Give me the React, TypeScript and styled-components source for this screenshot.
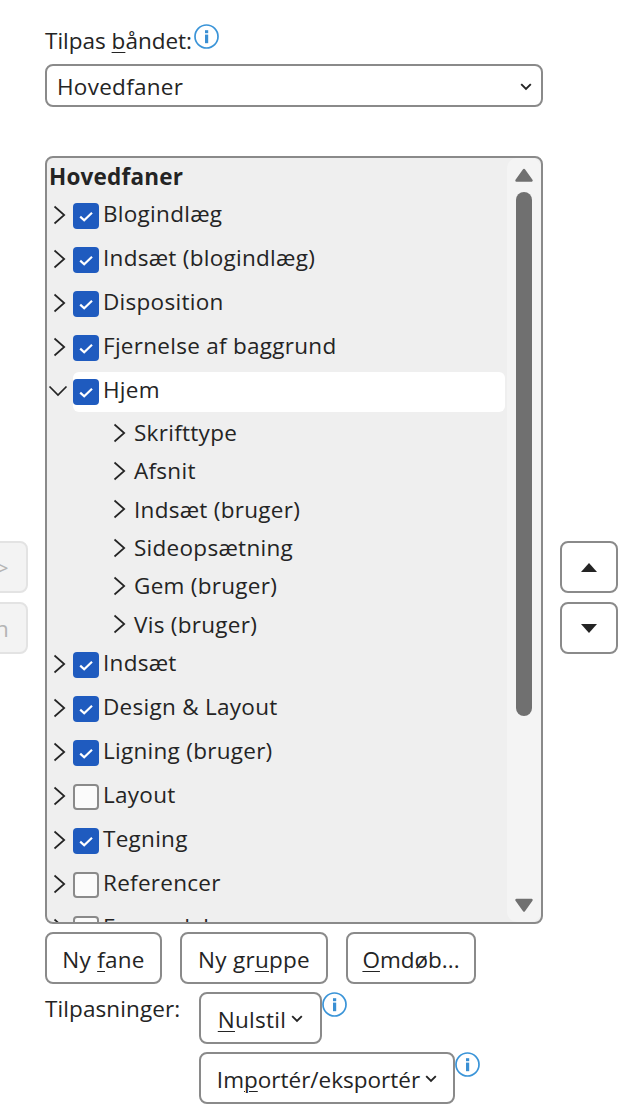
import styled, { createGlobalStyle } from "styled-components";

const GlobalStyle = createGlobalStyle`
  html, body {
    margin: 0;
    padding: 0;
    background: #fff;
    overflow: hidden;
  }
  body {
    font-family: "Open Sans", "Noto Sans", sans-serif;
    color: #242424;
  }
`;

const Page = styled.div`
  width: 630px;
  height: 1118px;
  overflow: hidden;
  display: grid;
  grid-template-columns: 28px 498px 1fr;
  column-gap: 17px;
  font-size: 22.5px;
  letter-spacing: 0.28px;
`;

const LeftColumn = styled.div`
  display: flex;
  flex-direction: column;
  align-items: flex-end;
  gap: 9px;
  padding-top: 541px;
`;

const MainColumn = styled.div`
  display: flex;
  flex-direction: column;
`;

const RightColumn = styled.div`
  display: flex;
  flex-direction: column;
  gap: 9px;
  padding-top: 541px;
`;

const TitleRow = styled.div`
  display: flex;
  align-items: flex-start;
  height: 64px;
  padding-top: 24px;
  box-sizing: border-box;
`;

const TitleText = styled.span`
  line-height: 34px;
  letter-spacing: 0;
  margin-right: 2px;
`;

const Key = styled.span`
  text-decoration: underline;
  text-decoration-thickness: 1px;
  text-underline-offset: 3px;
`;

const InfoWrap = styled.span`
  display: inline-flex;
  flex: none;
`;

const SelectBox = styled.div`
  box-sizing: border-box;
  height: 43px;
  border: 2px solid #8a8a8a;
  border-radius: 8px;
  display: flex;
  align-items: center;
  justify-content: space-between;
  padding: 2px 9px 0 10px;
  margin-bottom: 49px;
`;

const Tree = styled.div`
  position: relative;
  box-sizing: border-box;
  height: 768px;
  border: 2px solid #8a8a8a;
  border-radius: 8px;
  background: #efefef;
  overflow: hidden;
  padding-top: 4px;
`;

const TreeHeader = styled.div`
  height: 31px;
  line-height: 30px;
  padding-left: 2px;
  font-weight: 700;
  letter-spacing: 0.2px;
`;

const Row = styled.div`
  height: 44px;
  display: flex;
  align-items: center;
  position: relative;
  width: 458px;
`;

const RowHighlight = styled.div`
  position: absolute;
  left: 26px;
  right: 0;
  top: 3px;
  bottom: 1px;
  background: #fff;
  border-radius: 6px;
`;

const ChevronSlot = styled.span`
  position: relative;
  width: 26px;
  height: 26px;
  flex: none;
  display: flex;
  align-items: center;
  justify-content: center;
  margin-left: -1px;
  margin-right: 1px;
`;

const Check = styled.span<{ $on: boolean }>`
  position: relative;
  box-sizing: border-box;
  flex: none;
  width: 26px;
  height: 26px;
  margin-top: 2px;
  border-radius: 4px;
  display: flex;
  align-items: center;
  justify-content: center;
  background: ${(p) => (p.$on ? "#1f5bbf" : "#fbfbfb")};
  border: ${(p) => (p.$on ? "none" : "2px solid #8a8a8a")};
`;

const RowLabel = styled.span`
  position: relative;
  margin-left: 4px;
  margin-top: -4px;
  white-space: nowrap;
`;

const SubList = styled.div`
  height: 229px;
  padding-top: 1px;
  box-sizing: border-box;
`;

const SubRow = styled.div`
  height: 38.3px;
  display: flex;
  align-items: center;
  padding-left: 66px;
`;

const SubLabel = styled.span`
  margin-left: 8px;
  margin-top: -1px;
  white-space: nowrap;
`;

const ScrollTrack = styled.div`
  position: absolute;
  top: 0;
  right: 0;
  bottom: 0;
  width: 34px;
  background: #f4f4f4;
  border-radius: 10px;
  display: flex;
  flex-direction: column;
  align-items: center;
`;

const ScrollThumb = styled.div`
  width: 16px;
  height: 524px;
  margin-top: 9px;
  background: #707070;
  border-radius: 8px;
`;

const ScrollArrow = styled.svg<{ $down?: boolean }>`
  width: 18px;
  height: 15px;
  flex: none;
  margin-top: ${(p) => (p.$down ? "182px" : "10px")};
`;

const ActionRow = styled.div`
  display: flex;
  gap: 18px;
  margin-top: 8px;
`;

const Button = styled.div<{ $width: number; $tight?: boolean }>`
  box-sizing: border-box;
  width: ${(p) => p.$width}px;
  height: 52px;
  padding-top: 2px;
  border: 2px solid #8a8a8a;
  border-radius: 8px;
  background: #fff;
  display: flex;
  align-items: center;
  justify-content: center;
  gap: 5px;
  white-space: nowrap;
  letter-spacing: ${(p) => (p.$tight ? "0" : "inherit")};
`;

const CustomRow = styled.div`
  display: grid;
  grid-template-columns: 154px auto;
  margin-top: 8px;
`;

const CustomLabel = styled.span`
  line-height: 34px;
  letter-spacing: 0.1px;
`;

const CustomButtons = styled.div`
  display: flex;
  flex-direction: column;
  gap: 8px;
`;

const ButtonLine = styled.div`
  display: flex;
  align-items: flex-start;
`;

const SideButton = styled.div<{ $disabled?: boolean }>`
  box-sizing: border-box;
  width: 58px;
  height: 52px;
  flex: none;
  border-radius: 8px;
  display: flex;
  align-items: center;
  justify-content: ${(p) => (p.$disabled ? "flex-end" : "center")};
  padding-right: ${(p) => (p.$disabled ? "17px" : "0")};
  color: #b5b5b5;
  background: ${(p) => (p.$disabled ? "#f3f3f3" : "#fff")};
  border: 2px solid ${(p) => (p.$disabled ? "#e3e3e3" : "#8a8a8a")};
`;

const InfoIcon = () => (
  <InfoWrap>
    <svg width="25" height="25" viewBox="0 0 25 25">
      <circle cx="12.5" cy="12.5" r="11.5" fill="#fff" stroke="#3a94d8" strokeWidth="1.7" />
      <rect x="11" y="6.2" width="3.2" height="3" fill="#3a8fd3" />
      <rect x="11" y="10.6" width="3.2" height="8.6" fill="#3a8fd3" />
    </svg>
  </InfoWrap>
);

const Chevron = ({ open }: { open?: boolean }) =>
  open ? (
    <svg width="20" height="12" viewBox="0 0 20 12" style={{ marginLeft: -3 }}>
      <path d="M1.5 1.5 L10 10 L18.5 1.5" fill="none" stroke="#242424" strokeWidth="1.7" />
    </svg>
  ) : (
    <svg width="13" height="20" viewBox="0 0 13 20" style={{ marginTop: -1 }}>
      <path d="M1.5 1.5 L11.2 10 L1.5 18.5" fill="none" stroke="#242424" strokeWidth="1.7" />
    </svg>
  );

const SmallChevron = () => (
  <svg width="12" height="8" viewBox="0 0 12 8">
    <path d="M1.2 1.2 L6 6 L10.8 1.2" fill="none" stroke="#242424" strokeWidth="1.9" />
  </svg>
);

const CheckMark = () => (
  <svg width="16" height="13" viewBox="0 0 16 13">
    <path d="M2.2 6.6 L6.2 10.2 L14 2.8" fill="none" stroke="#fff" strokeWidth="2.2" />
  </svg>
);

type TreeItem = { label: string; checked: boolean; open?: boolean };

const topItems: TreeItem[] = [
  { label: "Blogindlæg", checked: true },
  { label: "Indsæt (blogindlæg)", checked: true },
  { label: "Disposition", checked: true },
  { label: "Fjernelse af baggrund", checked: true },
  { label: "Hjem", checked: true, open: true },
];

const bottomItems: TreeItem[] = [
  { label: "Indsæt", checked: true },
  { label: "Design & Layout", checked: true },
  { label: "Ligning (bruger)", checked: true },
  { label: "Layout", checked: false },
  { label: "Tegning", checked: true },
  { label: "Referencer", checked: false },
  { label: "Forsendelser", checked: false },
];

const subItems = ["Skrifttype", "Afsnit", "Indsæt (bruger)", "Sideopsætning", "Gem (bruger)", "Vis (bruger)"];

const TreeRow = ({ item }: { item: TreeItem }) => (
  <Row>
    {item.open && <RowHighlight />}
    <ChevronSlot>
      <Chevron open={item.open} />
    </ChevronSlot>
    <Check $on={item.checked}>{item.checked && <CheckMark />}</Check>
    <RowLabel>{item.label}</RowLabel>
  </Row>
);

export default function App() {
  return (
    <Page>
      <GlobalStyle />
      <LeftColumn>
        <SideButton $disabled>&gt;</SideButton>
        <SideButton $disabled>n</SideButton>
      </LeftColumn>

      <MainColumn>
        <TitleRow>
          <TitleText>
            Tilpas <Key>b</Key>åndet:
          </TitleText>
          <InfoIcon />
        </TitleRow>
        <SelectBox>
          Hovedfaner
          <SmallChevron />
        </SelectBox>

        <Tree>
          <TreeHeader>Hovedfaner</TreeHeader>
          {topItems.map((item) => (
            <TreeRow key={item.label} item={item} />
          ))}
          <SubList>
            {subItems.map((label) => (
              <SubRow key={label}>
                <Chevron />
                <SubLabel>{label}</SubLabel>
              </SubRow>
            ))}
          </SubList>
          {bottomItems.map((item) => (
            <TreeRow key={item.label} item={item} />
          ))}
          <ScrollTrack>
            <ScrollArrow viewBox="0 0 18 15">
              <path d="M9 2 L16.5 12.5 L1.5 12.5 Z" fill="#707070" stroke="#707070" strokeWidth="2.4" strokeLinejoin="round" />
            </ScrollArrow>
            <ScrollThumb />
            <ScrollArrow $down viewBox="0 0 18 15">
              <path d="M1.5 2 L16.5 2 L9 12.5 Z" fill="#707070" stroke="#707070" strokeWidth="2.4" strokeLinejoin="round" />
            </ScrollArrow>
          </ScrollTrack>
        </Tree>

        <ActionRow>
          <Button $width={117}>
            <span>
              Ny <Key>f</Key>ane
            </span>
          </Button>
          <Button $width={148}>
            <span>
              Ny gr<Key>u</Key>ppe
            </span>
          </Button>
          <Button $width={130} $tight>
            <span>
              <Key>O</Key>mdøb...
            </span>
          </Button>
        </ActionRow>

        <CustomRow>
          <CustomLabel>Tilpasninger:</CustomLabel>
          <CustomButtons>
            <ButtonLine>
              <Button $width={123}>
                <span>
                  <Key>N</Key>ulstil
                </span>
                <SmallChevron />
              </Button>
              <InfoIcon />
            </ButtonLine>
            <ButtonLine>
              <Button $width={256} $tight>
                <span>
                  Im<Key>p</Key>ortér/eksportér
                </span>
                <SmallChevron />
              </Button>
              <InfoIcon />
            </ButtonLine>
          </CustomButtons>
        </CustomRow>
      </MainColumn>

      <RightColumn>
        <SideButton>
          <svg width="16" height="9" viewBox="0 0 16 9">
            <path d="M8 0 L16 9 L0 9 Z" fill="#242424" />
          </svg>
        </SideButton>
        <SideButton>
          <svg width="16" height="9" viewBox="0 0 16 9">
            <path d="M0 0 L16 0 L8 9 Z" fill="#242424" />
          </svg>
        </SideButton>
      </RightColumn>
    </Page>
  );
}
